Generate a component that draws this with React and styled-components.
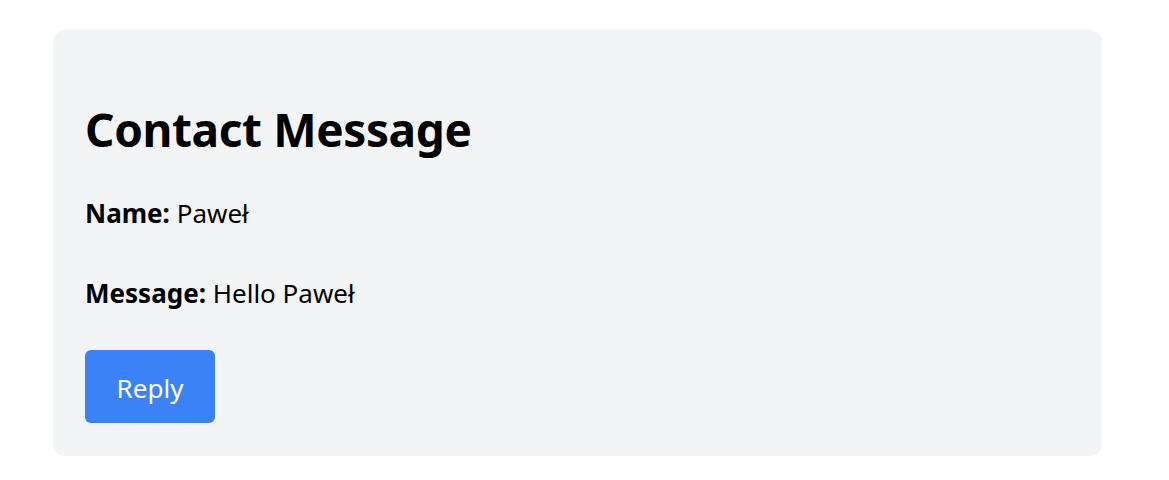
import React from 'react'
import styled, { createGlobalStyle } from 'styled-components'

const GlobalStyle = createGlobalStyle`
    body{
        margin: 0;
        background: #ffffff;
        font-family: "Noto Sans", "Open Sans", sans-serif;
        color: #000000;
    }
`

const Card = styled.div`
    margin: 30px 67px 0 53px;
    padding: 32px 32px 33px;
    background: #f3f4f6;
    border-radius: 12px;
`

const Title = styled.h1`
    margin: 39px 0 39px;
    font-size: 46px;
    line-height: 56px;
    font-weight: 700;
    letter-spacing: -0.4px;
`

const Line = styled.p`
    margin: 0 0 ${(props) => props.gap}px;
    font-size: 26px;
    line-height: 34px;

    strong{
        font-weight: 700;
    }
`

const ReplyButton = styled.button`
    display: flex;
    align-items: center;
    justify-content: center;
    width: 130px;
    height: 73px;
    padding: 3px 0 0;
    border: none;
    border-radius: 6px;
    background: #3b82f6;
    color: #ffffff;
    font-family: inherit;
    font-size: 26px;
    cursor: pointer;
`

const App = () => {
    return (
        <>
            <GlobalStyle />
            <Card>
                <Title>Contact Message</Title>
                <Line gap={46}>
                    <strong>Name:</strong> Paweł
                </Line>
                <Line gap={40}>
                    <strong>Message:</strong> Hello Paweł
                </Line>
                <ReplyButton>Reply</ReplyButton>
            </Card>
        </>
    )
}

export default App
